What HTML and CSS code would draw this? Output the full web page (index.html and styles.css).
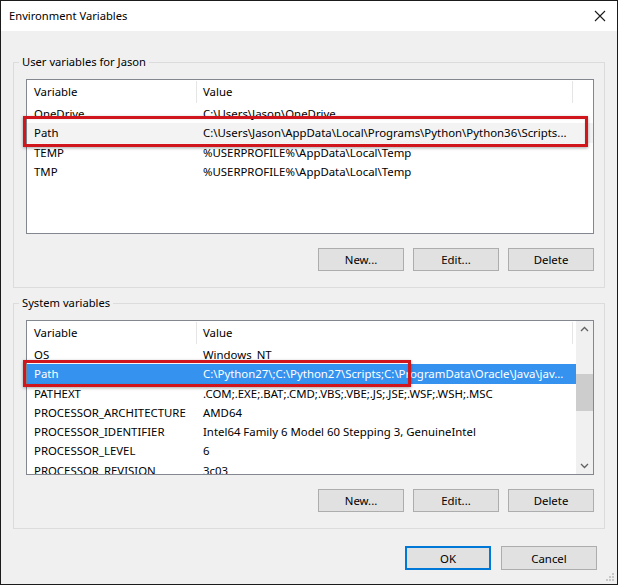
FILE: index.html
```html
<!DOCTYPE html>
<html>
<head>
<meta charset="utf-8">
<title>Environment Variables</title>
<link rel="stylesheet" href="styles.css">
</head>
<body>
<div class="window">
  <div class="titlebar">
    <span class="title">Environment Variables</span>
    <svg class="close" width="12" height="12" viewBox="0 0 12 12"><path d="M1 1L11 11M11 1L1 11" stroke="#1a1a1a" stroke-width="1.1" fill="none"/></svg>
  </div>
  <div class="content">
    <fieldset class="group">
      <legend>User variables for Jason</legend>
      <div class="list">
        <div class="rows">
          <div class="row head"><div class="c1">Variable</div><div class="c2">Value</div><div class="c3"></div></div>
          <div class="row"><div class="c1">OneDrive</div><div class="c2">C:\Users\Jason\OneDrive</div></div>
          <div class="row hover"><div class="c1">Path</div><div class="c2">C:\Users\Jason\AppData\Local\Programs\Python\Python36\Scripts...</div></div>
          <div class="row"><div class="c1">TEMP</div><div class="c2">%USERPROFILE%\AppData\Local\Temp</div></div>
          <div class="row"><div class="c1">TMP</div><div class="c2">%USERPROFILE%\AppData\Local\Temp</div></div>
        </div>
        <div class="mark mark-user"></div>
      </div>
      <div class="buttons">
        <button class="btn">New...</button>
        <button class="btn">Edit...</button>
        <button class="btn">Delete</button>
      </div>
    </fieldset>

    <fieldset class="group group-sys">
      <legend>System variables</legend>
      <div class="list">
        <div class="rows">
          <div class="row head"><div class="c1">Variable</div><div class="c2">Value</div></div>
          <div class="row"><div class="c1">OS</div><div class="c2">Windows_NT</div></div>
          <div class="row selected"><div class="c1">Path</div><div class="c2">C:\Python27\;C:\Python27\Scripts;C:\ProgramData\Oracle\Java\jav...</div></div>
          <div class="row"><div class="c1">PATHEXT</div><div class="c2">.COM;.EXE;.BAT;.CMD;.VBS;.VBE;.JS;.JSE;.WSF;.WSH;.MSC</div></div>
          <div class="row"><div class="c1">PROCESSOR_ARCHITECTURE</div><div class="c2">AMD64</div></div>
          <div class="row"><div class="c1">PROCESSOR_IDENTIFIER</div><div class="c2">Intel64 Family 6 Model 60 Stepping 3, GenuineIntel</div></div>
          <div class="row"><div class="c1">PROCESSOR_LEVEL</div><div class="c2">6</div></div>
          <div class="row"><div class="c1">PROCESSOR_REVISION</div><div class="c2">3c03</div></div>
        </div>
        <div class="scrollbar">
          <svg class="arrow" width="17" height="17" viewBox="0 0 17 17"><path d="M5 10L8.5 6.5L12 10" stroke="#606060" stroke-width="1.3" fill="none"/></svg>
          <div class="track"><div class="thumb"></div></div>
          <svg class="arrow" width="17" height="17" viewBox="0 0 17 17"><path d="M5 7L8.5 10.5L12 7" stroke="#606060" stroke-width="1.3" fill="none"/></svg>
        </div>
        <div class="mark mark-sys"></div>
      </div>
      <div class="buttons">
        <button class="btn">New...</button>
        <button class="btn">Edit...</button>
        <button class="btn">Delete</button>
      </div>
    </fieldset>

    <div class="footer">
      <button class="btn btn-default">OK</button>
      <button class="btn">Cancel</button>
    </div>
  </div>
  <svg class="grip" width="10" height="10" viewBox="0 0 10 10">
    <rect x="7" y="1" width="2" height="2" fill="#c8c8c8"/>
    <rect x="4" y="4" width="2" height="2" fill="#c8c8c8"/>
    <rect x="7" y="4" width="2" height="2" fill="#c8c8c8"/>
    <rect x="1" y="7" width="2" height="2" fill="#c8c8c8"/>
    <rect x="4" y="7" width="2" height="2" fill="#c8c8c8"/>
    <rect x="7" y="7" width="2" height="2" fill="#c8c8c8"/>
  </svg>
</div>
</body>
</html>
```

FILE: styles.css
```css
* { box-sizing: border-box; }

html, body {
  margin: 0;
  padding: 0;
  background: #ffffff;
}

body {
  font-family: "Noto Sans", "Open Sans", sans-serif;
  font-size: 11.4px;
  color: #000;
}

.window {
  position: relative;
  width: 618px;
  height: 585px;
  border: 1px solid #1b1b1b;
  background: #f0f0f0;
  display: flex;
  flex-direction: column;
  overflow: hidden;
}

.titlebar {
  height: 30px;
  background: #ffffff;
  display: flex;
  align-items: center;
  justify-content: space-between;
  padding: 0 11px 0 8px;
  flex-shrink: 0;
}

.title {
  font-size: 11.2px;
  line-height: 16px;
  margin-top: -1px;
}

.close {
  display: block;
}

.content {
  padding: 23px 12px 0 12px;
  display: flex;
  flex-direction: column;
}

.group {
  margin: 0;
  padding: 9px 10px 16px 12px;
  border: 1px solid #dcdcdc;
  min-width: 0;
}

.group-sys {
  margin-top: 7px;
}

.group legend {
  padding: 0 3px;
  margin-left: -7px;
  line-height: 16px;
  font-size: 11.2px;
}

.list {
  position: relative;
  height: 155px;
  border: 1px solid #828790;
  background: #ffffff;
  display: flex;
}

.rows {
  flex: 1;
  min-width: 0;
  overflow: hidden;
}

.row {
  display: flex;
  height: 19.3px;
  line-height: 19.3px;
  white-space: nowrap;
}

.row.head {
  height: 24px;
  line-height: 24px;
}

.c1 {
  width: 170px;
  padding-left: 7px;
  flex-shrink: 0;
  overflow: hidden;
}

.c2 {
  width: 377px;
  padding-left: 6px;
  flex-shrink: 0;
  overflow: hidden;
}

.head .c1 {
  border-right: 1px solid #e5e5e5;
  margin: 1px 0 1px 0;
  line-height: 22px;
}

.head .c2 {
  width: 376px;
  border-right: 1px solid #e5e5e5;
  margin: 1px 0;
  line-height: 22px;
}

.row.hover {
  background: #f3f3f3;
}

.row.selected {
  background: #3593ef;
  color: #ffffff;
}

.scrollbar {
  width: 17px;
  flex-shrink: 0;
  background: #f0f0f0;
  display: flex;
  flex-direction: column;
}

.arrow {
  display: block;
  flex-shrink: 0;
}

.track {
  flex: 1;
  position: relative;
}

.thumb {
  margin-top: 36px;
  height: 37px;
  background: #cdcdcd;
}

.mark {
  position: absolute;
  border: 3px solid #d0161c;
  box-shadow: 0 1px 3px rgba(0, 0, 0, 0.35), inset 0 0 2px rgba(0, 0, 0, 0.15);
  pointer-events: none;
}

.mark-user {
  left: -4px;
  top: 36px;
  width: 565px;
  height: 31px;
}

.mark-sys {
  left: -4px;
  top: 39px;
  width: 388px;
  height: 27px;
}

.buttons {
  display: flex;
  justify-content: flex-end;
  gap: 9px;
  margin-top: 14px;
}

.btn {
  width: 86px;
  height: 23px;
  background: #e1e1e1;
  border: 1px solid #adadad;
  font-family: "Noto Sans", "Open Sans", sans-serif;
  font-size: 11.4px;
  color: #000;
  padding: 0;
  margin: 0;
  border-radius: 0;
}

.footer {
  display: flex;
  justify-content: flex-end;
  gap: 10px;
  margin-top: 17px;
  padding-right: 8px;
}

.footer .btn {
  width: 86px;
  height: 24px;
}

.footer .btn:last-child {
  width: 96px;
}

.btn-default {
  border-color: #0078d7;
  box-shadow: inset 0 0 0 1px #0078d7;
}

.grip {
  position: absolute;
  right: 2px;
  bottom: 2px;
}
```
